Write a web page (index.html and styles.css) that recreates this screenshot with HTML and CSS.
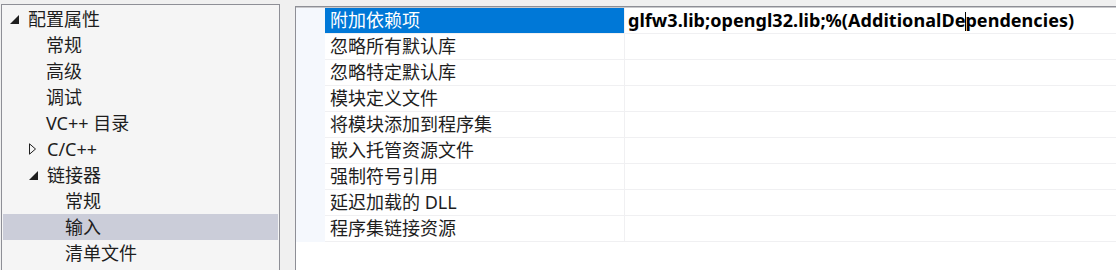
FILE: index.html
```html
<!DOCTYPE html>
<html lang="zh-CN">
<head>
<meta charset="utf-8">
<title>属性页</title>
<link rel="stylesheet" href="styles.css">
</head>
<body>
<div class="layout">
  <div class="tree">
    <div class="node lvl0"><span class="tw"><svg width="9" height="9" viewBox="0 0 9 9"><path d="M9 0 L9 9 L0 9 Z" fill="#1e1e1e"/></svg></span><span class="lbl">配置属性</span></div>
    <div class="node lvl1"><span class="lbl">常规</span></div>
    <div class="node lvl1"><span class="lbl">高级</span></div>
    <div class="node lvl1"><span class="lbl">调试</span></div>
    <div class="node lvl1"><span class="lbl">VC++ 目录</span></div>
    <div class="node lvl1 has"><span class="tw"><svg width="8" height="12" viewBox="0 0 8 12"><path d="M0.5 0.8 L6.5 6 L0.5 11.2 Z" fill="none" stroke="#1e1e1e" stroke-width="1"/></svg></span><span class="lbl">C/C++</span></div>
    <div class="node lvl1 has"><span class="tw"><svg width="9" height="9" viewBox="0 0 9 9"><path d="M9 0 L9 9 L0 9 Z" fill="#1e1e1e"/></svg></span><span class="lbl">链接器</span></div>
    <div class="node lvl2"><span class="lbl">常规</span></div>
    <div class="node lvl2 sel"><span class="lbl">输入</span></div>
    <div class="node lvl2"><span class="lbl">清单文件</span></div>
  </div>
  <div class="grid">
    <div class="gutter"></div>
    <div class="cols">
      <div class="row active"><div class="name">附加依赖项</div><div class="value"><span>glfw3.lib;opengl32.lib;%(AdditionalDe</span><span class="caret"></span><span>pendencies)</span></div></div>
      <div class="row"><div class="name">忽略所有默认库</div><div class="value"></div></div>
      <div class="row"><div class="name">忽略特定默认库</div><div class="value"></div></div>
      <div class="row"><div class="name">模块定义文件</div><div class="value"></div></div>
      <div class="row"><div class="name">将模块添加到程序集</div><div class="value"></div></div>
      <div class="row"><div class="name">嵌入托管资源文件</div><div class="value"></div></div>
      <div class="row"><div class="name">强制符号引用</div><div class="value"></div></div>
      <div class="row"><div class="name">延迟加载的 DLL</div><div class="value"></div></div>
      <div class="row"><div class="name">程序集链接资源</div><div class="value"></div></div>
    </div>
  </div>
</div>
</body>
</html>
```

FILE: styles.css
```css
html, body {
  margin: 0;
  padding: 0;
  height: 100%;
  overflow: hidden;
}
body {
  background: #f0f0f0;
  font-family: "Noto Sans", "Noto Sans CJK SC", sans-serif;
  font-size: 18px;
  color: #1e1e1e;
}
.layout {
  display: flex;
  height: 100%;
}
.tree {
  box-sizing: border-box;
  width: 279px;
  margin: 4px 0 0 1px;
  border: 1px solid #8e8f96;
  border-bottom: none;
  background: #f5f5f5;
  padding-top: 1px;
  flex: none;
}
.node {
  display: flex;
  align-items: center;
  height: 26px;
  margin: 0 1px;
  white-space: nowrap;
}
.node .tw {
  display: flex;
  align-items: center;
  justify-content: flex-start;
  width: 18px;
  flex: none;
}
.lvl0 { padding-left: 7px; }
.lvl0 .tw { padding-top: 1px; }
.lvl1 { padding-left: 43px; }
.lvl1.has { padding-left: 26px; }
.lvl2 { padding-left: 62px; }
.sel { background: #cbcdd9; }
.lbl { line-height: 26px; }
.grid {
  flex: 1;
  display: flex;
  margin: 6px 0 0 15px;
  border-left: 1px solid #8e8f96;
  border-top: 1px solid #8e8f96;
  box-shadow: inset 0 1px 0 #c9c9cc;
  padding-top: 1px;
  background: #ffffff;
  align-items: flex-start;
}
.cols {
  flex: 1;
  display: flex;
  flex-direction: column;
}
.gutter {
  width: 29px;
  flex: none;
  height: 234px;
  background: #f5f8fd;
}
.row {
  display: flex;
  height: 25px;
  border-bottom: 1px solid #f0f0f2;
}
.name {
  box-sizing: border-box;
  width: 299px;
  flex: none;
  padding-left: 5px;
  line-height: 25px;
  white-space: nowrap;
}
.value {
  flex: 1;
  border-left: 1px solid #f0f0f2;
  padding-left: 3px;
  line-height: 25px;
  white-space: nowrap;
  font-weight: bold;
  color: #000000;
  display: flex;
  align-items: center;
  letter-spacing: 0.05px;
}
.active .name {
  background: #0078d7;
  color: #ffffff;
}
.caret {
  display: inline-block;
  width: 1px;
  height: 19px;
  background: #000000;
  margin: 1px -1px 0 0;
  flex: none;
}
```
